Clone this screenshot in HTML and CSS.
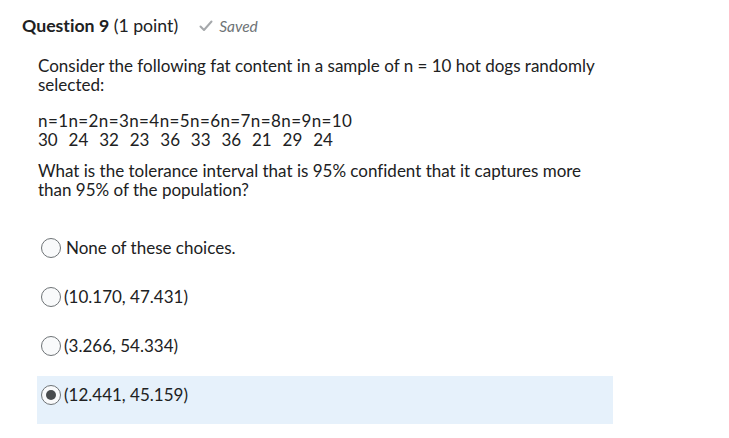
FILE: index.html
```html
<!DOCTYPE html>
<html>
<head>
<meta charset="utf-8">
<link rel="stylesheet" href="styles.css">
</head>
<body>
<div class="question">
  <div class="header">
    <h2 class="title"><span class="qnum">Question 9</span> <span class="points">(1 point)</span></h2>
    <span class="saved">
      <svg class="check" width="14" height="12" viewBox="0 0 14 12"><path d="M1.5 6.5 L5 10 L12.5 1.5" fill="none" stroke="#a5a8ab" stroke-width="2" stroke-linecap="round" stroke-linejoin="round"/></svg>
      <span class="saved-text">Saved</span>
    </span>
  </div>
  <div class="body">
    <p class="para">Consider the following fat content in a sample of n = 10 hot dogs randomly selected:</p>
    <p class="data"><span class="ns">n=1n=2n=3n=4n=5n=6n=7n=8n=9n=10</span><br><span class="nums">30 24 32 23 36 33 36 21 29 24</span></p>
    <p class="para">What is the tolerance interval that is 95% confident that it captures more than 95% of the population?</p>
  </div>
  <div class="options">
    <label class="option"><span class="radio"></span><span class="opt-text first">None of these choices.</span></label>
    <label class="option"><span class="radio"></span><span class="opt-text">(10.170, 47.431)</span></label>
    <label class="option"><span class="radio"></span><span class="opt-text">(3.266, 54.334)</span></label>
    <label class="option selected"><span class="radio checked"></span><span class="opt-text">(12.441, 45.159)</span></label>
  </div>
</div>
</body>
</html>
```
FILE: styles.css
```css
* { box-sizing: border-box; }
html, body { margin: 0; padding: 0; background: #fff; }
body {
  font-family: Lato, "Open Sans", sans-serif;
  color: #202122;
  font-variant-ligatures: none;
}
.question {
  padding: 15px 0 0 22px;
  width: 729px;
}
.header {
  display: flex;
  align-items: center;
  height: 22px;
}
.title {
  margin: 0;
  font-size: 17.7px;
  font-weight: 400;
  line-height: 22px;
  color: #202122;
}
.qnum { font-weight: 700; }
.saved {
  display: flex;
  align-items: center;
  margin-left: 21px;
  color: #6e7376;
}
.check { margin-right: 6px; }
.saved-text {
  font-style: italic;
  font-size: 15.5px;
}
.body {
  padding-left: 16px;
  margin-top: 19px;
  width: 590px;
}
.para {
  margin: 0 0 11px 0;
  font-size: 17px;
  line-height: 19px;
}
.data {
  margin: 17px 0 12px 0;
  font-size: 17px;
  line-height: 19px;
}
.ns { letter-spacing: 0.4px; }
.nums { word-spacing: 6.5px; }
.options {
  margin-top: 30px;
  margin-left: 15px;
  width: 576px;
  display: flex;
  flex-direction: column;
}
.option {
  display: flex;
  align-items: flex-start;
  height: 49px;
  padding: 9px 0 0 4px;
  font-size: 17px;
  line-height: 19px;
}
.option.selected {
  background: #e6f1fb;
  height: 48px;
}
.radio {
  width: 20px;
  height: 20px;
  border: 1px solid #6e7376;
  border-radius: 50%;
  background: #f9fafb;
  flex: none;
  margin-right: 3px;
  display: flex;
  align-items: center;
  justify-content: center;
}
.radio.checked::after {
  content: "";
  width: 10px;
  height: 10px;
  border-radius: 50%;
  background: #494c4e;
}
.opt-text.first { margin-left: 2px; }
```
